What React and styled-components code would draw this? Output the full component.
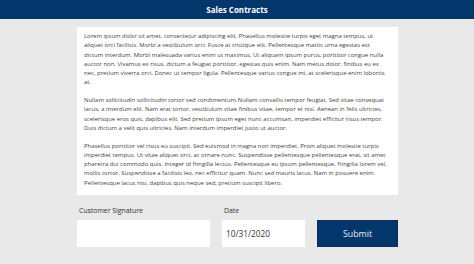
import styled, { createGlobalStyle } from "styled-components"

const GlobalStyle = createGlobalStyle`
  html, body {
    margin: 0;
    padding: 0;
    background: #e9e9e9;
  }
  body {
    font-family: "Open Sans", "Liberation Sans", sans-serif;
  }
`

const Page = styled.div`
  width: 474px;
  height: 264px;
  background: #e9e9e9;
  overflow: hidden;
`

const Header = styled.header`
  height: 19px;
  background: #03366a;
  color: #fff;
  display: flex;
  align-items: center;
  justify-content: center;
  font-size: 8px;
  font-weight: 700;
`

const Main = styled.main`
  width: 321px;
  margin: 8px auto 0 77px;
`

const Card = styled.section`
  background: #fff;
  padding: 5px 8px 11px 7px;
  height: 168px;
  box-sizing: border-box;
`

const Paragraph = styled.p`
  margin: 0 0 8.6px;
  font-size: 5.95px;
  line-height: 9.25px;
  color: #444;
  &:last-child {
    margin-bottom: 0;
  }
`

const Form = styled.form`
  display: grid;
  grid-template-columns: 133px 83px 81px;
  column-gap: 12px;
  align-items: end;
  margin-top: 11px;
`

const Field = styled.label`
  display: flex;
  flex-direction: column;
  gap: 4px;
`

const LabelText = styled.span`
  font-size: 6.9px;
  line-height: 10px;
  color: #333;
  padding-left: 2px;
`

const Input = styled.input`
  height: 27px;
  box-sizing: border-box;
  border: none;
  background: #fff;
  padding: 0 4px;
  font-family: inherit;
  font-size: 8.3px;
  color: #333;
  width: 100%;
  outline: none;
`

const SubmitButton = styled.button`
  height: 27px;
  border: 1px solid #0d2f57;
  background: #03366a;
  color: #e8eef6;
  font-family: inherit;
  font-size: 8.8px;
  cursor: pointer;
`

const paragraphs = [
  "Lorem ipsum dolor sit amet, consectetur adipiscing elit. Phasellus molestie turpis eget magna tempus, ut aliquet orci facilisis. Morbi a vestibulum orci. Fusce at tristique elit. Pellentesque mattis urna egestas est dictum interdum. Morbi malesuada varius enim ut maximus. Ut aliquam ipsum purus, porttitor congue nulla auctor non. Vivamus ex risus, dictum a feugiat porttitor, egestas quis enim. Nam metus dolor, finibus eu ex nec, pretium viverra orci. Donec ut tempor ligula. Pellentesque varius congue mi, at scelerisque enim lobortis at.",
  "Nullam sollicitudin sollicitudin tortor sed condimentum.Nullam convallis tempor feugiat. Sed vitae consequat lacus, a interdum elit. Nam erat tortor, vestibulum vitae finibus vitae, tempor et nisi. Aenean in felis ultricies, scelerisque eros quis, dapibus elit. Sed pretium ipsum eget nunc accumsan, imperdiet efficitur risus tempor. Duis dictum a velit quis ultricies. Nam interdum imperdiet justo ut auctor.",
  "Phasellus porttitor vel risus eu suscipit. Sed euismod in magna non imperdiet. Proin aliquet molestie turpis imperdiet tempus. Ut vitae aliquet orci, ac ornare nunc. Suspendisse pellentesque pellentesque erat, sit amet pharetra dui commodo quis. Integer id fringilla lectus. Pellentesque eu ipsum pellentesque, fringilla lorem vel, mollis tortor. Suspendisse a facilisis leo, nec efficitur quam. Nunc sed mauris lacus. Nam in posuere enim. Pellentesque lacus nisi, dapibus quis neque sed, pretium suscipit libero.",
]

export default function App() {
  return (
    <Page>
      <GlobalStyle />
      <Header>Sales Contracts</Header>
      <Main>
        <Card>
          {paragraphs.map((text, i) => (
            <Paragraph key={i}>{text}</Paragraph>
          ))}
        </Card>
        <Form onSubmit={(e) => e.preventDefault()}>
          <Field>
            <LabelText>Customer Signature</LabelText>
            <Input type="text" />
          </Field>
          <Field>
            <LabelText>Date</LabelText>
            <Input type="text" defaultValue="10/31/2020" />
          </Field>
          <SubmitButton type="submit">Submit</SubmitButton>
        </Form>
      </Main>
    </Page>
  )
}
